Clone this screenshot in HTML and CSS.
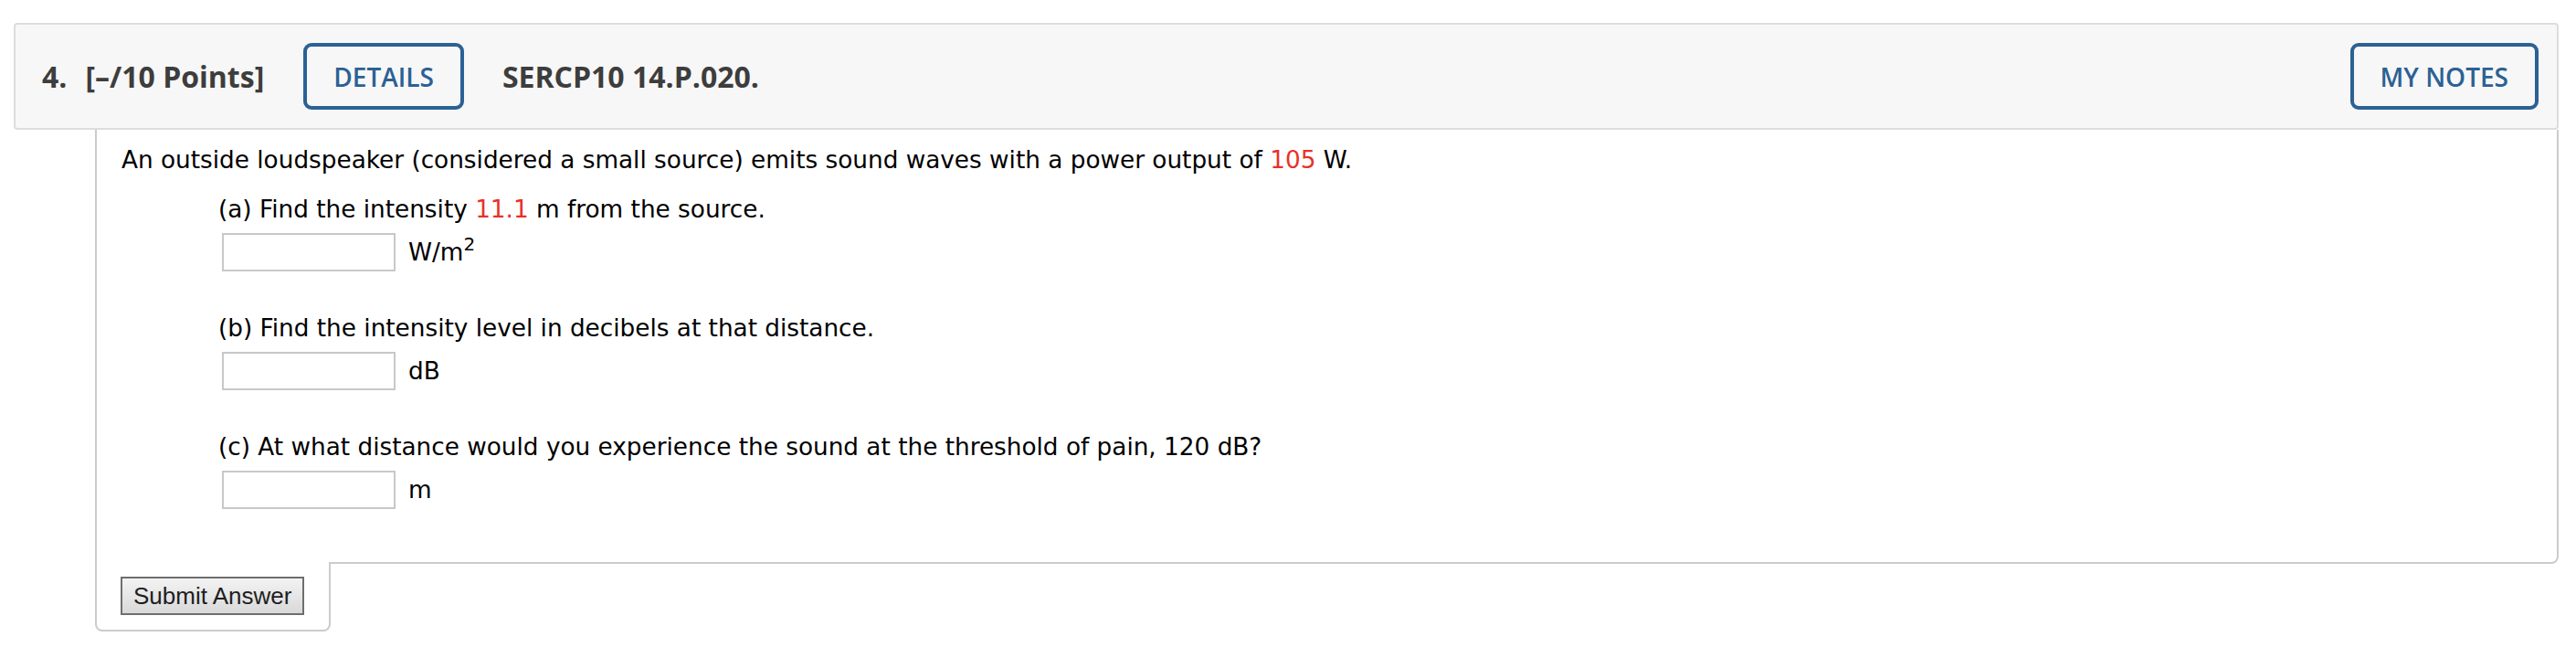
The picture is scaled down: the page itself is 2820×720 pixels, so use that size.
FILE: index.html
```html
<!DOCTYPE html>
<html lang="en">
<head>
<meta charset="utf-8">
<title>Question 4</title>
<link rel="stylesheet" href="styles.css">
</head>
<body>
<div class="page">
  <div class="qhead">
    <span class="qnum">4.</span>
    <span class="qpts">[–/10 Points]</span>
    <button class="hbtn details">DETAILS</button>
    <span class="qid">SERCP10 14.P.020.</span>
    <button class="hbtn notes">MY NOTES</button>
  </div>
  <div class="qbody">
    <div class="qcontent">
      <p class="intro">An outside loudspeaker (considered a small source) emits sound waves with a power output of <span class="red">105</span> W.</p>
      <div class="part">
        <p class="ptext">(a) Find the intensity <span class="red">11.1</span> m from the source.</p>
        <div class="ans"><input class="field" type="text"><span class="unit">W/m<sup>2</sup></span></div>
      </div>
      <div class="part">
        <p class="ptext">(b) Find the intensity level in decibels at that distance.</p>
        <div class="ans"><input class="field" type="text"><span class="unit">dB</span></div>
      </div>
      <div class="part">
        <p class="ptext">(c) At what distance would you experience the sound at the threshold of pain, 120 dB?</p>
        <div class="ans"><input class="field" type="text"><span class="unit">m</span></div>
      </div>
    </div>
    <div class="tab"><button class="submit">Submit Answer</button></div>
  </div>
</div>
</body>
</html>
```
FILE: styles.css
```css
html, body {
  margin: 0;
  padding: 0;
  background: #fff;
}
.page {
  padding: 25px 19px 0 15px;
}
.qhead {
  display: flex;
  align-items: center;
  background: #f7f7f7;
  border: 2px solid #dddddd;
  border-radius: 4px;
  padding: 20px 20px 20px 29px;
  font-family: "Open Sans", "Liberation Sans", sans-serif;
  color: #3d3d3d;
}
.qnum, .qpts, .qid {
  font-weight: 700;
  font-size: 32px;
  line-height: 40px;
}
.qpts {
  margin-left: 20px;
}
.hbtn {
  box-sizing: border-box;
  height: 73px;
  padding: 0 29px;
  border: 4px solid #2b6194;
  border-radius: 9px;
  background: transparent;
  color: #2b6194;
  font-family: "Open Sans", "Liberation Sans", sans-serif;
  font-weight: 600;
  font-size: 28px;
  line-height: 1;
}
.details {
  margin-left: 43px;
}
.qid {
  margin-left: 42px;
}
.notes {
  margin-left: auto;
}
.qbody {
  display: flex;
  flex-direction: column;
  margin-left: 89px;
  font-family: "DejaVu Sans", "Liberation Sans", sans-serif;
  font-size: 26.3px;
  line-height: 32px;
  color: #000;
}
.qcontent {
  border: 2px solid #cccccc;
  border-top: none;
  border-bottom-right-radius: 8px;
  padding: 17px 27px 58px 27px;
}
.intro {
  margin: 0 0 22px 0;
}
.red {
  color: #e9302a;
}
.part {
  margin-left: 106px;
  margin-bottom: 46px;
}
.part:last-child {
  margin-bottom: 0;
}
.ptext {
  margin: 0 0 10px 0;
}
.ans {
  display: flex;
  align-items: center;
  padding-left: 4px;
}
.field {
  box-sizing: border-box;
  width: 190px;
  height: 42px;
  margin: 0;
  border: 2px solid #c8c8c8;
  background: #fff;
  padding: 0 6px;
}
.unit {
  margin-left: 14px;
}
.unit sup {
  font-size: 20px;
  line-height: 0;
  vertical-align: 11px;
}
.tab {
  align-self: flex-start;
  margin-top: -2px;
  background: #fff;
  border: 2px solid #cccccc;
  border-top: none;
  border-radius: 0 0 8px 8px;
  padding: 16px 27px 16px 26px;
}
.submit {
  display: block;
  box-sizing: border-box;
  height: 42px;
  padding: 0 12px;
  border: 2px solid #6e6e6e;
  background: linear-gradient(#f3f3f3, #d9d9d9);
  color: #1e1e1e;
  font-family: "Liberation Sans", Arial, sans-serif;
  font-size: 26px;
  line-height: 1;
}
```
